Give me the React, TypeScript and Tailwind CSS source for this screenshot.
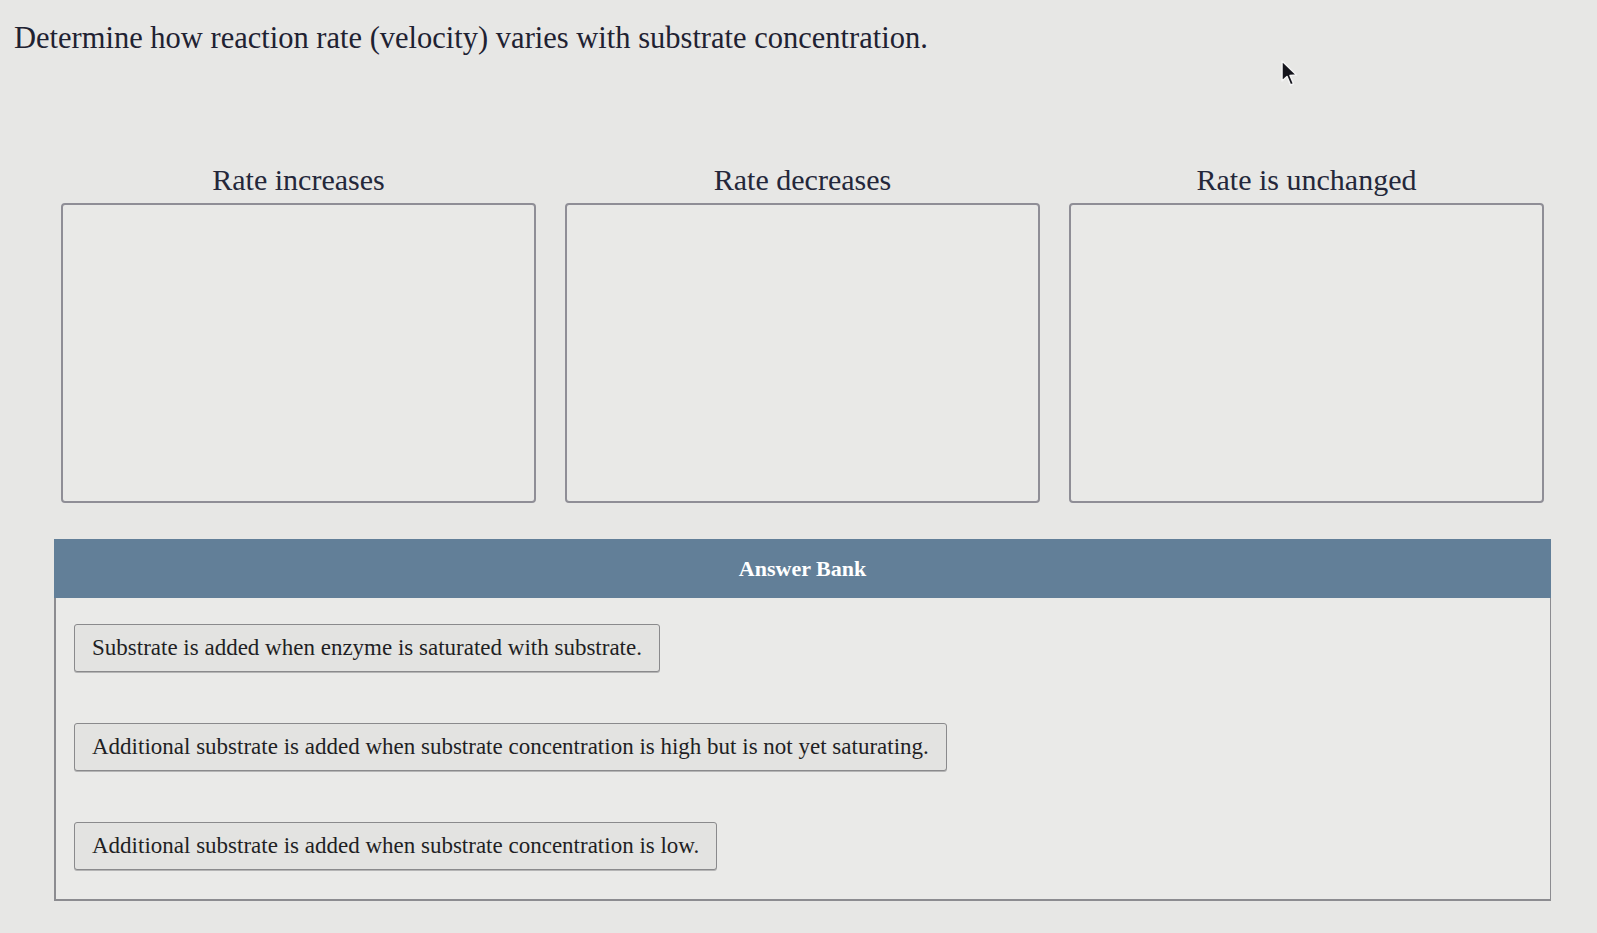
import React from "react";

const serif = { fontFamily: '"Liberation Serif", "Times New Roman", serif' };

function DropBox({ label }: { label: string }) {
  return (
    <div className="flex flex-col">
      <div className="text-center text-[30px] leading-[34px] text-[#24273a]">{label}</div>
      <div className="mt-[6px] h-[300px] rounded-[4px] border-2 border-[#8f8e96] bg-[#e9e9e7]" />
    </div>
  );
}

function Item({ text }: { text: string }) {
  return (
    <div className="self-start rounded-[3px] border border-[#8a8a8c] bg-[#e3e3e1] px-[17px] h-[48px] flex items-center text-[23px] text-[#1f1f24] shadow-[0_1px_0_#b5b5b5]">
      {text}
    </div>
  );
}

export default function App() {
  return (
    <div className="relative min-h-[933px] w-full bg-[#e7e7e5] overflow-hidden" style={serif}>
      <div className="pl-[14px] pt-[21px] text-[30.5px] leading-[34px] text-[#1f2232]">
        Determine how reaction rate (velocity) varies with substrate concentration.
      </div>

      <div className="ml-[61px] mr-[53px] mt-[108px] grid grid-cols-3 gap-[29px]">
        <DropBox label="Rate increases" />
        <DropBox label="Rate decreases" />
        <DropBox label="Rate is unchanged" />
      </div>

      <div className="ml-[54px] mr-[46px] mt-[36px]">
        <div className="h-[59px] bg-[#627f98] flex items-center justify-center text-white text-[22px] font-bold">
          Answer Bank
        </div>
        <div className="border-l-2 border-r border-b-2 border-[#8c8c90] bg-[#eaeae8] pl-[18px] pt-[26px] pb-[29px] flex flex-col gap-[51px]">
          <Item text="Substrate is added when enzyme is saturated with substrate." />
          <Item text="Additional substrate is added when substrate concentration is high but is not yet saturating." />
          <Item text="Additional substrate is added when substrate concentration is low." />
        </div>
      </div>

      <svg
        className="absolute left-[1279px] top-[59px]"
        width="22"
        height="30"
        viewBox="0 0 22 30"
      >
        <path
          d="M3 2 L3 22 L8 17.5 L11.5 26 L14.5 24.8 L11 16.5 L17.5 16 Z"
          fill="#15151c"
          stroke="#f4f4f4"
          strokeWidth="1.5"
          strokeLinejoin="round"
        />
      </svg>
    </div>
  );
}
